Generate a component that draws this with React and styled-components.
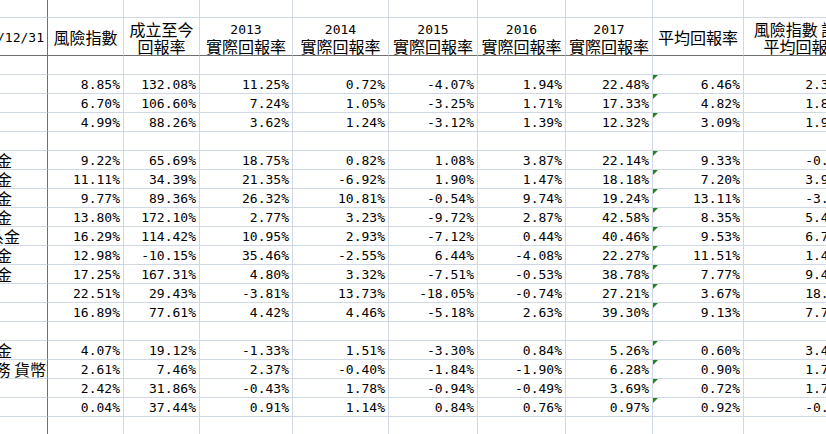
import React from "react";
import styled, { createGlobalStyle } from "styled-components";

const GlobalStyle = createGlobalStyle`
  html, body {
    margin: 0;
    padding: 0;
    background: #fff;
    overflow: hidden;
  }
`;

const COLS = "48px 76px 76px 93px 96px 89px 88px 87px 91px 120px";
const GRID = "#d0d7e5";
const FREEZE = "#6f6f6f";
const CJK = `"Noto Sans CJK TC", "Noto Sans CJK SC", sans-serif`;
const MONO = `"DejaVu Sans Mono", "Liberation Mono", monospace`;

const Sheet = styled.div`
  width: 826px;
  height: 434px;
  overflow: hidden;
  background: #fff;
  color: #000;
`;

const Row = styled.div`
  display: grid;
  grid-template-columns: ${COLS};
  height: ${(p) => p.$h || 19}px;
  width: max-content;
`;

const Cell = styled.div`
  box-sizing: border-box;
  position: relative;
  overflow: hidden;
  white-space: nowrap;
  border-right: 1px solid ${(p) => (p.$frozen ? FREEZE : GRID)};
  border-bottom: 1px solid ${(p) => (p.$split ? FREEZE : GRID)};
`;

const HeadCell = styled(Cell)`
  display: flex;
  flex-direction: column;
  align-items: center;
  justify-content: center;
  font-family: ${CJK};
  font-size: 16px;
  line-height: 17px;
  padding-top: 2px;
`;

const DateHead = styled(HeadCell)`
  align-items: flex-end;
  padding-right: 3px;
  font-family: ${MONO};
  font-size: 13px;
`;

const Year = styled.span`
  font-family: ${MONO};
  font-size: 13px;
  line-height: 17px;
`;

const Label = styled.span`
  display: block;
`;

const NameCell = styled(Cell)`
  display: flex;
  justify-content: flex-end;
  font-family: ${CJK};
  font-size: 16px;
  line-height: 18px;
`;

const NameText = styled.span`
  flex: none;
  margin-right: ${(p) => p.$shift}px;
`;

const NumCell = styled(Cell)`
  text-align: right;
  padding: 2px 3px 0 0;
  font-family: ${MONO};
  font-size: 13px;
  line-height: 16px;
`;

const Flag = styled.span`
  position: absolute;
  left: 0;
  top: 0;
  width: 0;
  height: 0;
  border-top: 5px solid #1d861d;
  border-right: 5px solid transparent;
`;

const groups = [
  [
    ["", 0, "8.85%", "132.08%", "11.25%", "0.72%", "-4.07%", "1.94%", "22.48%", "6.46%", "2.3087%"],
    ["", 0, "6.70%", "106.60%", "7.24%", "1.05%", "-3.25%", "1.71%", "17.33%", "4.82%", "1.8122%"],
    ["", 0, "4.99%", "88.26%", "3.62%", "1.24%", "-3.12%", "1.39%", "12.32%", "3.09%", "1.9104%"],
  ],
  [
    ["基金", 35, "9.22%", "65.69%", "18.75%", "0.82%", "1.08%", "3.87%", "22.14%", "9.33%", "-0.105%"],
    ["基金", 35, "11.11%", "34.39%", "21.35%", "-6.92%", "1.90%", "1.47%", "18.18%", "7.20%", "3.9256%"],
    ["基金", 35, "9.77%", "89.36%", "26.32%", "10.81%", "-0.54%", "9.74%", "19.24%", "13.11%", "-3.318%"],
    ["基金", 35, "13.80%", "172.10%", "2.77%", "3.23%", "-9.72%", "2.87%", "42.58%", "8.35%", "5.4112%"],
    ["證券系金", 27, "16.29%", "114.42%", "10.95%", "2.93%", "-7.12%", "0.44%", "40.46%", "9.53%", "6.7004%"],
    ["基金", 35, "12.98%", "-10.15%", "35.46%", "-2.55%", "6.44%", "-4.08%", "22.27%", "11.51%", "1.4381%"],
    ["基金", 35, "17.25%", "167.31%", "4.80%", "3.32%", "-7.51%", "-0.53%", "38.78%", "7.77%", "9.4226%"],
    ["", 0, "22.51%", "29.43%", "-3.81%", "13.73%", "-18.05%", "-0.74%", "27.21%", "3.67%", "18.841%"],
    ["", 0, "16.89%", "77.61%", "4.42%", "4.46%", "-5.18%", "2.63%", "39.30%", "9.13%", "7.7063%"],
  ],
  [
    ["基金", 35, "4.07%", "19.12%", "-1.33%", "1.51%", "-3.30%", "0.84%", "5.26%", "0.60%", "3.4275%"],
    ["債務 貨幣市場", -31, "2.61%", "7.46%", "2.37%", "-0.40%", "-1.84%", "-1.90%", "6.28%", "0.90%", "1.7159%"],
    ["", 0, "2.42%", "31.86%", "-0.43%", "1.78%", "-0.94%", "-0.49%", "3.69%", "0.72%", "1.7033%"],
    ["", 0, "0.04%", "37.44%", "0.91%", "1.14%", "0.84%", "0.76%", "0.97%", "0.92%", "-0.842%"],
  ],
];

const headers = [
  { year: "", label: ["風險指數"] },
  { year: "", label: ["成立至今", "回報率"] },
  { year: "2013", label: ["實際回報率"] },
  { year: "2014", label: ["實際回報率"] },
  { year: "2015", label: ["實際回報率"] },
  { year: "2016", label: ["實際回報率"] },
  { year: "2017", label: ["實際回報率"] },
  { year: "", label: ["平均回報率"] },
  { year: "", label: ["風險指數 調整", "平均回報率"] },
];

function EmptyRow({ h, split }) {
  return (
    <Row $h={h}>
      {COLS.split(" ").map((_, i) => (
        <Cell key={i} $frozen={i === 0} $split={split} />
      ))}
    </Row>
  );
}

function DataRow({ row }) {
  const [name, shift, ...nums] = row;
  return (
    <Row>
      <NameCell $frozen>
        <NameText $shift={shift}>{name}</NameText>
      </NameCell>
      {nums.map((n, i) => (
        <NumCell key={i}>
          {i === 7 && <Flag />}
          {n}
        </NumCell>
      ))}
    </Row>
  );
}

export default function App() {
  return (
    <Sheet>
      <GlobalStyle />
      <EmptyRow h={18} />
      <Row $h={38}>
        <DateHead $frozen $split>
          2017/12/31
        </DateHead>
        {headers.map((h, i) => (
          <HeadCell key={i} $split>
            {h.year && <Year>{h.year}</Year>}
            {h.label.map((l) => (
              <Label key={l}>{l}</Label>
            ))}
          </HeadCell>
        ))}
      </Row>
      {groups.map((g, gi) => (
        <React.Fragment key={gi}>
          <EmptyRow />
          {g.map((r, ri) => (
            <DataRow key={ri} row={r} />
          ))}
        </React.Fragment>
      ))}
      <EmptyRow />
    </Sheet>
  );
}
